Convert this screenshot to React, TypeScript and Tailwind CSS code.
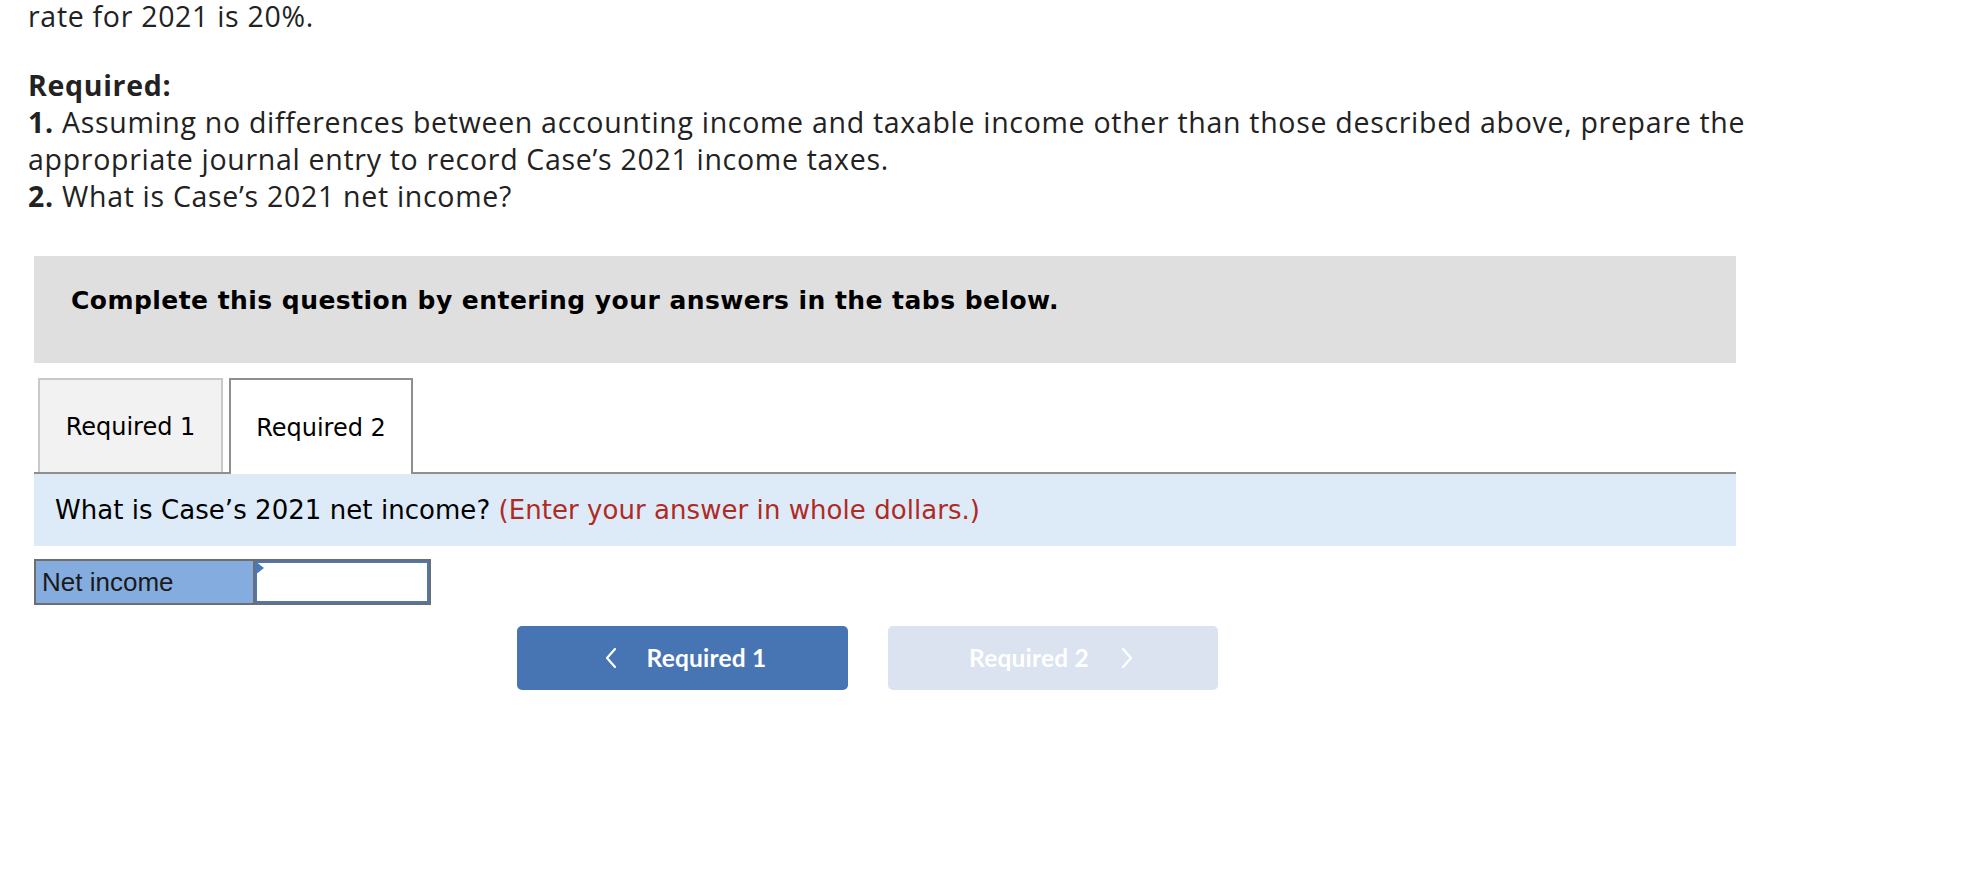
export default function App() {
  return (
    <div className="w-[1988px] h-[880px] bg-white overflow-hidden">
      <div className="pl-[28px] text-[#222222] font-['Open_Sans','Noto_Sans',sans-serif] text-[28.5px] leading-[37px] tracking-[0.7px] whitespace-nowrap">
        <p className="leading-[32px]">rate for 2021 is 20%.</p>
        <div className="mt-[35px]">
          <p className="font-bold">Required:</p>
          <p>
            <span className="font-bold">1.</span> Assuming no differences between accounting income and taxable income other than those described above, prepare the
          </p>
          <p>appropriate journal entry to record Case’s 2021 income taxes.</p>
          <p>
            <span className="font-bold">2.</span> What is Case’s 2021 net income?
          </p>
        </div>
      </div>

      <div className="ml-[34px] w-[1702px] mt-[41px]">
        <div className="h-[107px] bg-[#dfdfdf] pl-[37px] pt-[30px]">
          <p className="font-['DejaVu_Sans','Verdana',sans-serif] font-bold text-[25px] leading-[30px] tracking-[0.45px] text-black whitespace-nowrap">
            Complete this question by entering your answers in the tabs below.
          </p>
        </div>

        <div className="mt-[15px] flex items-end gap-[6px] pl-[4px] border-b-2 border-[#8f8f8f] h-[96px] font-['DejaVu_Sans','Verdana',sans-serif] text-[24px] text-black">
          <div className="w-[185px] h-[94px] bg-[#f2f2f2] border-2 border-b-0 border-[#c9c9c9] flex items-center justify-center pt-[2px]">
            Required 1
          </div>
          <div className="w-[184px] h-[96px] -mb-[2px] bg-white border-2 border-b-0 border-[#8f8f8f] flex items-center justify-center pt-[2px]">
            Required 2
          </div>
        </div>

        <div className="h-[72px] bg-[#ddebf8] pl-[21px] flex items-center font-['DejaVu_Sans','Verdana',sans-serif] text-[26px] tracking-[0.05px] text-black whitespace-nowrap">
          <span>
            What is Case’s 2021 net income? <span className="text-[#b02a24]">(Enter your answer in whole dollars.)</span>
          </span>
        </div>

        <div className="mt-[13px] flex w-[397px] h-[46px] border-2 border-[#6e6e6e]">
          <div className="w-[219px] bg-[#84acdf] border-r-2 border-[#6e6e6e] pl-[6px] flex items-center font-['Liberation_Sans','Arial',sans-serif] text-[26px] text-[#1a1a1a]">
            Net income
          </div>
          <div className="relative flex-1 bg-white border-2 border-[#4b77b6]">
            <svg className="absolute -left-[2px] -top-[2px]" width="9" height="14" viewBox="0 0 9 14">
              <polygon points="0,0 9,7 0,14" fill="#4b77b6" />
            </svg>
          </div>
        </div>

        <div className="mt-[21px] ml-[483px] flex gap-[40px] font-['Lato','Noto_Sans',sans-serif] font-bold text-[24.5px] tracking-[0.2px] text-white">
          <div className="w-[331px] h-[64px] rounded-[5px] bg-[#4774b2] flex items-center justify-center gap-[30px] pl-[6px]">
            <svg width="12" height="22" viewBox="0 0 12 22" fill="none">
              <polyline points="10,2 2,11 10,20" stroke="white" strokeWidth="2.2" strokeLinecap="round" strokeLinejoin="round" />
            </svg>
            <span>Required 1</span>
          </div>
          <div className="w-[330px] h-[64px] rounded-[5px] bg-[#dae3ef] flex items-center justify-center gap-[32px] pr-[4px]">
            <span>Required 2</span>
            <svg width="12" height="22" viewBox="0 0 12 22" fill="none">
              <polyline points="2,2 10,11 2,20" stroke="white" strokeWidth="2.2" strokeLinecap="round" strokeLinejoin="round" />
            </svg>
          </div>
        </div>
      </div>
    </div>
  );
}
